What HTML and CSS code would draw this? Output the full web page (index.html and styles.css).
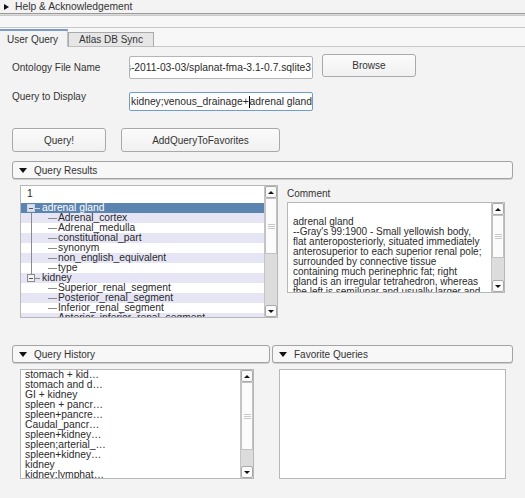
FILE: index.html
```html
<!DOCTYPE html>
<html>
<head>
<meta charset="utf-8">
<link rel="stylesheet" href="styles.css">
</head>
<body>
<div class="help"><span class="tri-right"></span><span>Help &amp; Acknowledgement</span></div>
<div class="rule-dark"></div>
<div class="gap-band"></div>
<div class="tabs">
  <div class="tab active">User Query</div>
  <div class="tab">Atlas DB Sync</div>
  <div class="tab-fill"></div>
</div>
<div class="panel">
  <div class="row row-file">
    <div class="label label-file">Ontology File Name</div>
    <div class="field field-file"><span>s-2011-03-03/splanat-fma-3.1-0.7.sqlite3</span></div>
    <div class="btn btn-browse">Browse</div>
  </div>
  <div class="row row-query">
    <div class="label label-query">Query to Display</div>
    <div class="field field-query"><span>kidney;venous_drainage+</span><span class="caret"></span><span>adrenal gland</span></div>
  </div>
  <div class="row row-btns">
    <div class="btn btn-query">Query!</div>
    <div class="btn btn-fav">AddQueryToFavorites</div>
  </div>
  <div class="hdr hdr-results"><span class="tri-down"></span><span>Query Results</span></div>
  <div class="results">
    <div class="box tree">
      <div class="list">
        <div class="r0">1</div>
        <div class="r sel root"><span class="pm"></span><span class="dash"></span>adrenal gland</div>
        <div class="r odd pipe child"><span class="conn"></span>Adrenal_cortex</div>
        <div class="r pipe child"><span class="conn"></span>Adrenal_medulla</div>
        <div class="r odd pipe child"><span class="conn"></span>constitutional_part</div>
        <div class="r pipe child"><span class="conn"></span>synonym</div>
        <div class="r odd pipe child"><span class="conn"></span>non_english_equivalent</div>
        <div class="r pipe child"><span class="conn"></span>type</div>
        <div class="r odd root pipe-top"><span class="pm"></span><span class="dash"></span>kidney</div>
        <div class="r child"><span class="conn"></span>Superior_renal_segment</div>
        <div class="r odd child"><span class="conn"></span>Posterior_renal_segment</div>
        <div class="r child"><span class="conn"></span>Inferior_renal_segment</div>
        <div class="r odd child"><span class="conn"></span>Anterior_inferior_renal_segment</div>
      </div>
      <div class="vscroll sb-tree">
        <div class="sb-btn"><span class="up"></span></div>
        <div class="sb-thumb"><span class="grip"></span></div>
        <div class="sb-track"></div>
        <div class="sb-btn"><span class="down"></span></div>
      </div>
    </div>
    <div class="comment-col">
      <div class="comment-label">Comment</div>
      <div class="box comment">
        <div class="ctext">adrenal gland<br>--Gray's 99:1900 - Small yellowish body,<br>flat anteroposteriorly, situated immediately<br>anterosuperior to each superior renal pole;<br>surrounded by connective tissue<br>containing much perinephric fat; right<br>gland is an irregular tetrahedron, whereas<br>the left is semilunar and usually larger and<br>higher.</div>
        <div class="vscroll sb-comment">
          <div class="sb-btn"><span class="up"></span></div>
          <div class="sb-thumb"><span class="grip"></span></div>
          <div class="sb-track"></div>
          <div class="sb-btn"><span class="down"></span></div>
        </div>
      </div>
    </div>
  </div>
  <div class="hdr-row">
    <div class="hdr hdr-hist"><span class="tri-down"></span><span>Query History</span></div>
    <div class="hdr hdr-favs"><span class="tri-down"></span><span>Favorite Queries</span></div>
  </div>
  <div class="bottom">
    <div class="box hist">
      <div class="hlist">
        <div>stomach + kid…</div>
        <div>stomach and d…</div>
        <div>GI + kidney</div>
        <div>spleen + pancr…</div>
        <div>spleen+pancre…</div>
        <div>Caudal_pancr…</div>
        <div>spleen+kidney…</div>
        <div>spleen;arterial_…</div>
        <div>spleen+kidney…</div>
        <div>kidney</div>
        <div>kidney;lymphat…</div>
      </div>
      <div class="vscroll sb-hist">
        <div class="sb-btn"><span class="up"></span></div>
        <div class="sb-thumb"><span class="grip"></span></div>
        <div class="sb-track"></div>
        <div class="sb-btn"><span class="down"></span></div>
      </div>
    </div>
    <div class="box favs"></div>
  </div>
</div>
</body>
</html>
```

FILE: styles.css
```css
* { box-sizing: border-box; }
html, body { margin: 0; padding: 0; }
body {
  width: 525px;
  height: 498px;
  overflow: hidden;
  background: #f3f3f3;
  font-family: "Liberation Sans", Arial, sans-serif;
  font-size: 10px;
  color: #2a2a2a;
}
.help {
  height: 13px;
  display: flex;
  align-items: center;
  gap: 6px;
  padding-left: 4px;
  color: #333;
  font-size: 10.3px;
}
.tri-right {
  width: 0; height: 0;
  border-top: 3.5px solid transparent;
  border-bottom: 3.5px solid transparent;
  border-left: 5px solid #111;
}
.tri-down {
  width: 0; height: 0;
  border-left: 4px solid transparent;
  border-right: 4px solid transparent;
  border-top: 5px solid #111;
}
.rule-dark {
  height: 3px;
  border-top: 1px solid #9a9a9a;
  border-bottom: 1px solid #c9c9c9;
  background: #dcdcdc;
}
.gap-band {
  height: 12px;
  background: #f7f7f7;
  border-bottom: 1px solid #c8c8c8;
}
.tabs {
  height: 19px;
  display: flex;
  align-items: flex-end;
  background: #f7f7f7;
}
.tab {
  height: 15px;
  padding: 0 10px;
  display: flex;
  align-items: center;
  background: #e6e6e6;
  border: 1px solid #a9a9a9;
  border-bottom: 1px solid #c0c0c0;
  color: #333;
}
.tab.active {
  height: 18px;
  width: 68px;
  padding: 0 0 0 7px;
  background: #f3f3f3;
  border: none;
  border-top: 2px solid #7c9cc6;
  border-right: 1px solid #c0c0c0;
}
.tab-fill {
  flex: 1;
  height: 1px;
  background: #c8c8c8;
}
.panel {
  padding: 0 12px;
}
.row { display: flex; align-items: center; }
.label { width: 117px; color: #333; }
.label-file { padding-top: 4px; }
.row-file { margin-top: 6px; height: 25px; }
.field {
  background: #fff;
  border: 1px solid #b5b5b5;
  border-radius: 2px;
  overflow: hidden;
  white-space: nowrap;
  display: flex;
  align-items: center;
  font-size: 10.3px;
}
.field-file {
  width: 184px;
  height: 23px;
  margin-top: 4px;
  justify-content: flex-end;
  padding-right: 1px;
}
.btn {
  height: 24px;
  display: flex;
  align-items: center;
  justify-content: center;
  border: 1px solid #a9a9a9;
  border-radius: 3px;
  background: linear-gradient(#fbfbfb, #f1f1f1);
  color: #333;
}
.btn-browse { width: 94px; margin-left: 9px; height: 23px; }
.row-query { margin-top: 14px; align-items: flex-start; height: 18px; }
.label-query { margin-top: -1px; }
.field-query {
  width: 184px;
  height: 19px;
  border: 1px solid #6f9ccf;
  padding-left: 1px;
}
.caret {
  width: 1px;
  height: 12px;
  background: #000;
}
.row-btns { margin-top: 18px; gap: 15px; }
.btn-query { width: 94px; }
.btn-fav { width: 159px; }
.hdr {
  height: 18px;
  display: flex;
  align-items: center;
  gap: 7px;
  padding-left: 6px;
  border: 1px solid #a3a3a3;
  border-radius: 3px;
  background: #f7f7f7;
  box-shadow: 0 1px 0 #cfcfcf;
  color: #333;
}
.hdr-results { margin-top: 9px; width: 501px; }
.results {
  display: flex;
  align-items: flex-start;
  padding-left: 8px;
  margin-top: 6px;
}
.box {
  background: #fff;
  border: 1px solid #b7b7b7;
  display: flex;
  overflow: hidden;
}
.tree { width: 258px; height: 133px; }
.list {
  flex: 1;
  overflow: hidden;
  font-size: 10.3px;
  color: #2a2a2a;
}
.r0 { height: 17px; padding: 2px 0 0 6px; line-height: 12px; }
.r {
  height: 10px;
  line-height: 10px;
  white-space: nowrap;
  display: flex;
  align-items: center;
}
.r.odd { background-color: #e5e5f6; }
.r.sel { background-color: #5b84b0; color: #fff; }
.r.root { padding-left: 6px; }
.r.child { padding-left: 27px; }
.pipe {
  background-image: linear-gradient(#8a8a8a, #8a8a8a);
  background-repeat: no-repeat;
  background-position: 10px 0;
  background-size: 1px 100%;
}
.pipe-top {
  background-image: linear-gradient(#8a8a8a, #8a8a8a);
  background-repeat: no-repeat;
  background-position: 10px 0;
  background-size: 1px 2px;
}
.pm {
  width: 8px;
  height: 8px;
  border: 1px solid #8c8c8c;
  background: #f4f4f4 linear-gradient(#555, #555) center / 4px 1px no-repeat;
  flex: none;
}
.sel .pm { background-color: #d9e2ee; border-color: #c8d4e4; }
.dash {
  width: 5px;
  height: 1px;
  background: #8a8a8a;
  margin-right: 2px;
  flex: none;
}
.sel .dash { background: #c9d5e5; }
.conn {
  width: 9px;
  height: 1px;
  background: #8a8a8a;
  margin-right: 1px;
  flex: none;
}
.vscroll {
  width: 13px;
  flex: none;
  display: flex;
  flex-direction: column;
  border-left: 1px solid #c4c4c4;
  background: #dedede;
}
.sb-btn {
  height: 12px;
  flex: none;
  display: flex;
  align-items: center;
  justify-content: center;
  background: #fafafa;
  border: 1px solid #a9a9a9;
  border-radius: 2px;
}
.up {
  width: 0; height: 0;
  border-left: 3px solid transparent;
  border-right: 3px solid transparent;
  border-bottom: 3px solid #111;
}
.down {
  width: 0; height: 0;
  border-left: 3px solid transparent;
  border-right: 3px solid transparent;
  border-top: 3px solid #111;
}
.sb-thumb {
  flex: none;
  background: #fbfbfb;
  border: 1px solid #c2c2c2;
  display: flex;
  align-items: center;
  justify-content: center;
}
.grip {
  width: 7px;
  height: 5px;
  border-top: 1px solid #c8c8c8;
  border-bottom: 1px solid #c8c8c8;
  background: linear-gradient(#c8c8c8, #c8c8c8) center / 100% 1px no-repeat;
}
.sb-track { flex: 1; background: #dcdcdc; }
.sb-tree .sb-thumb { height: 56px; }
.sb-comment .sb-thumb { height: 43px; }
.sb-hist .sb-thumb { height: 68px; }
.comment-col { margin-left: 9px; }
.comment-label { height: 17px; padding-top: 3px; color: #333; }
.comment { width: 218px; height: 91px; }
.ctext {
  flex: 1;
  padding: 14px 0 0 5px;
  font-size: 10px;
  line-height: 10px;
  color: #2a2a2a;
  overflow: hidden;
  white-space: nowrap;
}
.hdr-row { display: flex; gap: 2px; margin-top: 27px; }
.hdr-hist { width: 258px; }
.hdr-favs { width: 241px; }
.bottom {
  display: flex;
  padding-left: 8px;
  margin-top: 6px;
  gap: 25px;
}
.hist { width: 234px; height: 110px; }
.hlist {
  flex: 1;
  padding: 0 0 0 4px;
  font-size: 10.3px;
  line-height: 10px;
  overflow: hidden;
  white-space: nowrap;
}
.favs { width: 227px; height: 110px; }
```
